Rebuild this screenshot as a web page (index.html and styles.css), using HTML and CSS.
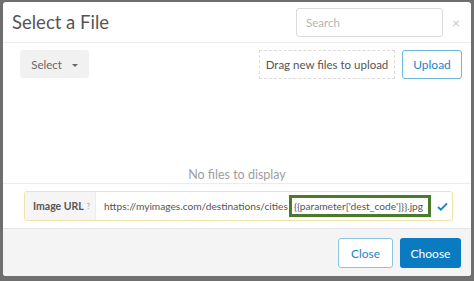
FILE: index.html
```html
<!DOCTYPE html>
<html lang="en">
<head>
  <meta charset="UTF-8">
  <title>Select a File</title>
  <link rel="stylesheet" href="styles.css">
</head>
<body>
  <div class="modal">
    <div class="modal-header">
      <h1>Select a File</h1>
      <input class="search" type="text" placeholder="Search">
      <span class="close-x">&times;</span>
    </div>
    <div class="modal-body">
      <div class="toolbar">
        <button class="btn-select">Select <span class="caret"></span></button>
        <div class="toolbar-right">
          <div class="dropzone">Drag new files to upload</div>
          <button class="btn-upload">Upload</button>
        </div>
      </div>
      <div class="empty">No files to display</div>
    </div>
    <div class="url-row">
      <div class="url-group">
        <span class="url-label">Image URL <sup>?</sup></span>
        <span class="url-value">https://myimages.com/destinations/cities<span class="param">{{parameter['dest_code']}}.jpg</span></span>
        <svg class="check" width="11" height="9" viewBox="0 0 12 10"><path d="M1 5.5 L4.2 8.5 L11 1.5" fill="none" stroke="#1b86c8" stroke-width="2.2"/></svg>
      </div>
    </div>
    <div class="modal-footer">
      <button class="btn-close">Close</button>
      <button class="btn-choose">Choose</button>
    </div>
  </div>
</body>
</html>
```

FILE: styles.css
```css
* {
  margin: 0;
  padding: 0;
  box-sizing: border-box;
}

body {
  font-family: 'Lato', 'Liberation Sans', sans-serif;
  background: #6f6f6f;
  width: 474px;
  height: 281px;
  padding: 2px 3px 5px 3px;
  overflow: hidden;
}

.modal {
  background: #fff;
  border-radius: 3px;
  height: 274px;
  display: flex;
  flex-direction: column;
  overflow: hidden;
}

.modal-header {
  display: flex;
  align-items: center;
  height: 41px;
  padding: 0 2px 0 9px;
  border-bottom: 1px solid #ececec;
}

.modal-header h1 {
  font-size: 18.5px;
  font-weight: 400;
  color: #555;
  flex: 1;
}

.search {
  width: 147px;
  height: 29px;
  border: 1px solid #dcdcdc;
  border-radius: 3px;
  padding: 0 9px;
  font-family: inherit;
  font-size: 11.5px;
  color: #555;
}

.search::placeholder {
  color: #b5b5b5;
}

.close-x {
  width: 26px;
  text-align: center;
  color: #c8c8c8;
  font-size: 14px;
}

.modal-body {
  height: 141px;
  padding: 7px 9px 0 17px;
  display: flex;
  flex-direction: column;
  border-bottom: 1px solid #ececec;
}

.toolbar {
  display: flex;
  justify-content: space-between;
}

.toolbar-right {
  display: flex;
  gap: 7px;
}

button {
  font-family: inherit;
  font-size: 12px;
  cursor: pointer;
}

.btn-select {
  width: 69px;
  height: 28px;
  border: none;
  border-radius: 3px;
  background: #f1f1f1;
  color: #666;
  font-size: 11.5px;
}

.caret {
  display: inline-block;
  margin-left: 7px;
  vertical-align: middle;
  border-left: 3px solid transparent;
  border-right: 3px solid transparent;
  border-top: 3px solid #666;
}

.dropzone {
  width: 136px;
  height: 29px;
  border: 1px dashed #dadada;
  display: flex;
  align-items: center;
  justify-content: center;
  font-size: 11.5px;
  color: #555;
}

.btn-upload {
  width: 60px;
  height: 29px;
  border: 1px solid #6fb6de;
  border-radius: 3px;
  background: #fff;
  color: #1b86c8;
}

.empty {
  margin-top: auto;
  line-height: 16px;
  text-align: center;
  font-size: 12.5px;
  color: #9e9e9e;
  padding-right: 8px;
}

.url-row {
  height: 45px;
  padding: 7px 18px 0 21px;
  border-bottom: 1px solid #e6e6e6;
}

.url-group {
  display: flex;
  align-items: center;
  height: 30px;
  border: 1px solid #f1e4a4;
  border-radius: 3px;
  overflow: hidden;
}

.url-label {
  align-self: stretch;
  display: flex;
  align-items: center;
  padding: 0 0 0 8px;
  width: 71px;
  flex-shrink: 0;
  white-space: nowrap;
  background: #f5f5f5;
  border-right: 1px solid #ececec;
  font-size: 10.5px;
  font-weight: 700;
  color: #555;
}

.url-label sup {
  font-size: 7px;
  font-weight: 400;
  color: #999;
  margin-left: 3px;
}

.url-value {
  display: flex;
  align-items: center;
  padding-left: 8px;
  font-size: 10.2px;
  color: #555;
  white-space: nowrap;
}

.param {
  border: 3px solid #4c7a2c;
  padding: 2px 5px 2px 2px;
  margin-left: 1px;
}

.check {
  flex-shrink: 0;
  margin-left: 6px;
}

.modal-footer {
  flex: 1;
  background: #f4f4f4;
  display: flex;
  justify-content: flex-end;
  align-items: flex-start;
  gap: 7px;
  padding: 9px 10px 0 0;
}

.btn-close {
  width: 55px;
  height: 30px;
  border: 1px solid #8cc4e4;
  border-radius: 3px;
  background: #fff;
  color: #1b86c8;
}

.btn-choose {
  width: 61px;
  height: 30px;
  border: none;
  border-radius: 3px;
  background: #0b7bc1;
  color: #fff;
}
```
